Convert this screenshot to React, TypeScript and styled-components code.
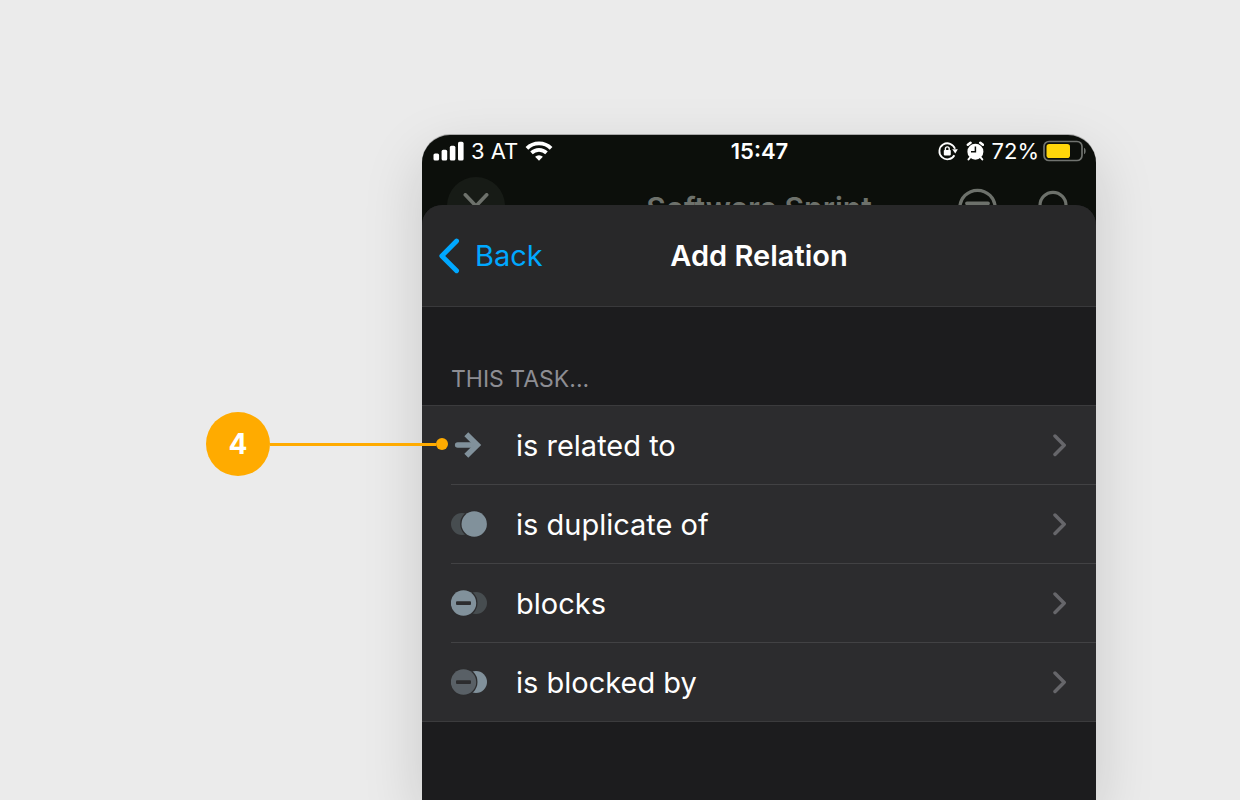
import React from "react";
import styled, { createGlobalStyle } from "styled-components";

const GlobalStyle = createGlobalStyle`
  *, *::before, *::after { box-sizing: border-box; }
  body {
    margin: 0;
    background: #ebebeb;
    font-family: Inter, "Liberation Sans", sans-serif;
  }
  button { font: inherit; color: inherit; background: none; border: 0; padding: 0; cursor: pointer; }
`;

const Stage = styled.main`
  display: flex;
  min-height: 100vh;
  padding: 135px 144px 0 422px;
  overflow: hidden;
`;

const Phone = styled.section`
  flex: 1;
  display: flex;
  flex-direction: column;
  min-width: 0;
  border-radius: 28px 28px 0 0;
  background: #0c0f0b;
  color: #fff;
  box-shadow: 0 -1px 0 rgba(0, 0, 0, 0.25), 0 20px 60px rgba(0, 0, 0, 0.15);
`;

const StatusBar = styled.div`
  display: grid;
  grid-template-columns: 1fr auto 1fr;
  align-items: center;
  height: 34px;
  padding: 0 10px 2px 11px;
  font-size: 22px;
  line-height: 32px;
`;

const StatusGroup = styled.div<{ $end?: boolean }>`
  display: flex;
  align-items: center;
  justify-content: ${(p) => (p.$end ? "flex-end" : "flex-start")};
  gap: ${(p) => (p.$end ? "8px" : "7px")};
`;

const Clock = styled.time`
  font-weight: 600;
`;

const Battery = styled.span`
  display: flex;
  align-items: center;
  gap: 4px;
`;

const Backdrop = styled.div`
  height: 36px;
  overflow: hidden;
  color: #6d716b;
`;

const BackdropBar = styled.div`
  display: grid;
  grid-template-columns: 1fr auto 1fr;
  align-items: center;
  height: 74px;
  padding: 0 25px;
`;

const BackdropTitle = styled.h2`
  margin: 0;
  padding-top: 4px;
  font-size: 30px;
  line-height: 36px;
  font-weight: 600;
`;

const CloseButton = styled.button`
  display: grid;
  place-items: center;
  width: 58px;
  height: 58px;
  border-radius: 50%;
  background: #171b16;
`;

const BackdropTools = styled.div`
  display: flex;
  justify-content: flex-end;
  gap: 37px;
  padding-top: 4px;
`;

const ToolButton = styled.button`
  display: flex;
`;

const Sheet = styled.div`
  flex: 1;
  border-radius: 20px 20px 0 0;
  background: #1c1c1e;
`;

const SheetHeader = styled.header`
  display: grid;
  grid-template-columns: 1fr auto 1fr;
  align-items: center;
  height: 102px;
  padding: 0 16px;
  border-bottom: 1px solid #39393b;
  border-radius: 20px 20px 0 0;
  background: #282829;
`;

const BackButton = styled.button`
  display: flex;
  align-items: center;
  justify-self: start;
  gap: 14px;
  color: #00a8ff;
  font-size: 29px;
  line-height: 36px;
`;

const Title = styled.h1`
  margin: 0;
  font-size: 29px;
  line-height: 36px;
  font-weight: 600;
`;

const SectionLabel = styled.h2`
  margin: 0;
  padding: 58px 29px 12px;
  color: #8d8d93;
  font-size: 23px;
  line-height: 28px;
  font-weight: 400;
`;

const List = styled.ul`
  margin: 0;
  padding: 0;
  list-style: none;
  border-top: 1px solid #3b3b3d;
  border-bottom: 1px solid #3b3b3d;
  background: #2c2c2e;
`;

const Item = styled.li`
  position: relative;
  padding-left: 29px;
`;

const RowButton = styled.button`
  display: flex;
  align-items: center;
  width: 100%;
  height: 79px;
  padding-right: 29px;
  border-bottom: 1px solid #424244;
  font-size: 29px;
  line-height: 36px;
  text-align: left;

  ${Item}:last-child & {
    height: 78px;
    border-bottom: 0;
  }
`;

const RowIcon = styled.span`
  display: flex;
  width: 65px;
`;

const RowText = styled.span`
  flex: 1;
  padding-top: 2px;
`;

const Callout = styled.div`
  position: absolute;
  top: 6px;
  left: -216px;
  display: flex;
  align-items: center;
  width: 242px;
  pointer-events: none;
`;

const CalloutNumber = styled.strong`
  display: grid;
  place-items: center;
  width: 64px;
  height: 64px;
  border-radius: 50%;
  background: #ffab00;
  font-size: 28px;
  line-height: 36px;
  font-weight: 700;
`;

const CalloutLine = styled.span`
  flex: 1;
  height: 3px;
  background: #ffab00;
`;

const CalloutDot = styled.span`
  width: 12px;
  height: 12px;
  border-radius: 50%;
  background: #ffab00;
`;

const SignalIcon = () => (
  <svg width="31" height="20" viewBox="0 0 31 20" fill="#fff" aria-hidden="true">
    <rect x="0.5" y="12.5" width="5.6" height="7" rx="1.6" />
    <rect x="8.6" y="8.8" width="5.6" height="10.7" rx="1.6" />
    <rect x="16.8" y="4.8" width="5.6" height="14.7" rx="1.6" />
    <rect x="25" y="0.8" width="5.6" height="18.7" rx="1.6" />
  </svg>
);

const WifiIcon = () => (
  <svg width="28" height="20" viewBox="0 0 28 20" fill="none" stroke="#fff" aria-hidden="true">
    <path d="M1.9 7.3a17.2 17.2 0 0 1 24.2 0" strokeWidth="3.8" />
    <path d="M6.5 11.9a10.7 10.7 0 0 1 15 0" strokeWidth="3.6" />
    <path d="M14 19.7l-3.9-3.9a5.6 5.6 0 0 1 7.8 0z" fill="#fff" stroke="none" />
  </svg>
);

const LockIcon = () => (
  <svg width="20" height="20" viewBox="0 0 20 20" fill="none" aria-hidden="true">
    <path d="M16.4 14.2A8 8 0 1 1 17 7.8" stroke="#fff" strokeWidth="1.8" />
    <path d="M14.2 8.2h5.6l-2.500 4.200z" fill="#fff" />
    <rect x="5.8" y="9" width="7" height="5.4" rx="0.8" fill="#fff" />
    <path d="M7.400 9.300V7.800a1.900 1.900 0 0 1 3.800 0v1.500" stroke="#fff" strokeWidth="1.400" />
  </svg>
);

const AlarmIcon = () => (
  <svg width="18" height="20" viewBox="0 0 18 20" fill="none" aria-hidden="true">
    <circle cx="9.4" cy="10.7" r="8" fill="#fff" />
    <path d="M1.9 3.7l2.6-1.900M16.900 3.700l-2.600-1.900" stroke="#fff" strokeWidth="2.600" strokeLinecap="round" />
    <path d="M4 16.700l-1.500 1.700M14.800 16.700l1.500 1.700" stroke="#fff" strokeWidth="2" strokeLinecap="round" />
    <path d="M9.400 5.500v5.300H5" stroke="#0c0f0b" strokeWidth="1.500" />
  </svg>
);

const BatteryIcon = () => (
  <svg width="43" height="22" viewBox="0 0 43 22" fill="none" aria-hidden="true">
    <rect x="1" y="1.5" width="38" height="19" rx="5" stroke="#70736f" strokeWidth="1.7" />
    <rect x="3.5" y="4" width="23.5" height="14" rx="2.800" fill="#ffd60a" />
    <path d="M41 7.800c2.200.9 2.200 5.500 0 6.400z" fill="#70736f" />
  </svg>
);

const CrossIcon = () => (
  <svg width="26" height="26" viewBox="0 0 26 26" fill="none" stroke="currentColor" strokeWidth="3.6" strokeLinecap="round" aria-hidden="true">
    <path d="M2.300 1.800l21.400 22.400M23.700 1.800L2.300 24.200" />
  </svg>
);

const FilterIcon = () => (
  <svg width="40" height="40" viewBox="0 0 40 40" fill="none" stroke="currentColor" strokeWidth="3.2" aria-hidden="true">
    <circle cx="19.500" cy="20" r="17.700" />
    <path d="M9 15.300h21M12.500 22.300h14M16 29.300h7" strokeWidth="3.800" strokeLinecap="round" />
  </svg>
);

const SearchIcon = () => (
  <svg width="36" height="36" viewBox="0 0 36 36" fill="none" stroke="currentColor" strokeWidth="3.2" strokeLinecap="round" aria-hidden="true">
    <circle cx="18" cy="17.300" r="13" />
    <path d="M27 26.500l7 7.500" />
  </svg>
);

const BackIcon = () => (
  <svg width="23" height="36" viewBox="0 0 23 36" fill="none" stroke="currentColor" strokeWidth="4.8" strokeLinecap="round" strokeLinejoin="round" aria-hidden="true">
    <path d="M18.600 3L3.800 18l14.800 14.800" />
  </svg>
);

const ChevronIcon = () => (
  <svg width="14" height="24" viewBox="0 0 14 24" fill="none" stroke="#66666a" strokeWidth="3.5" strokeLinecap="round" strokeLinejoin="round" aria-hidden="true">
    <path d="M2 3l9.200 9.200-9.200 9.200" />
  </svg>
);

const RelatedIcon = () => (
  <svg width="37" height="28" viewBox="0 0 37 28" fill="none" stroke="#81919b" aria-hidden="true">
    <path d="M6.700 14H25" strokeWidth="5.600" strokeLinecap="round" />
    <path d="M15.300 3.300L26.200 14 15.300 24.700" strokeWidth="5.600" />
  </svg>
);

const DuplicateIcon = () => (
  <svg width="37" height="28" viewBox="0 0 37 28" aria-hidden="true">
    <circle cx="11" cy="14" r="11" fill="#474d50" />
    <circle cx="23.200" cy="14" r="14" fill="#2c2c2e" />
    <circle cx="23.200" cy="14" r="12.700" fill="#81919b" />
  </svg>
);

const BlockIcon = ({ front, behind }: { front: string; behind: string }) => (
  <svg width="37" height="28" viewBox="0 0 37 28" aria-hidden="true">
    <circle cx="25" cy="14" r="11" fill={behind} />
    <circle cx="12.500" cy="14" r="14" fill="#2c2c2e" />
    <circle cx="12.500" cy="14" r="12.700" fill={front} />
    <rect x="5" y="12.200" width="15" height="3.800" rx="1" fill="#2c2c2e" />
  </svg>
);

const relations = [
  { label: "is related to", icon: <RelatedIcon />, step: 4 },
  { label: "is duplicate of", icon: <DuplicateIcon /> },
  { label: "blocks", icon: <BlockIcon front="#81919b" behind="#474d50" /> },
  { label: "is blocked by", icon: <BlockIcon front="#596066" behind="#81919b" /> },
];

export default function App() {
  return (
    <>
      <GlobalStyle />
      <Stage>
        <Phone>
          <StatusBar>
            <StatusGroup>
              <SignalIcon />
              <span>3 AT</span>
              <WifiIcon />
            </StatusGroup>
            <Clock>15:47</Clock>
            <StatusGroup $end>
              <LockIcon />
              <AlarmIcon />
              <Battery>
                <span>72%</span>
                <BatteryIcon />
              </Battery>
            </StatusGroup>
          </StatusBar>
          <Backdrop>
            <BackdropBar>
              <CloseButton aria-label="Close">
                <CrossIcon />
              </CloseButton>
              <BackdropTitle>Software Sprint</BackdropTitle>
              <BackdropTools>
                <ToolButton aria-label="Filter">
                  <FilterIcon />
                </ToolButton>
                <ToolButton aria-label="Search">
                  <SearchIcon />
                </ToolButton>
              </BackdropTools>
            </BackdropBar>
          </Backdrop>
          <Sheet>
            <SheetHeader>
              <BackButton>
                <BackIcon />
                Back
              </BackButton>
              <Title>Add Relation</Title>
            </SheetHeader>
            <SectionLabel>THIS TASK...</SectionLabel>
            <List>
              {relations.map((r) => (
                <Item key={r.label}>
                  <RowButton>
                    <RowIcon>{r.icon}</RowIcon>
                    <RowText>{r.label}</RowText>
                    <ChevronIcon />
                  </RowButton>
                  {r.step && (
                    <Callout>
                      <CalloutNumber>{r.step}</CalloutNumber>
                      <CalloutLine />
                      <CalloutDot />
                    </Callout>
                  )}
                </Item>
              ))}
            </List>
          </Sheet>
        </Phone>
      </Stage>
    </>
  );
}
